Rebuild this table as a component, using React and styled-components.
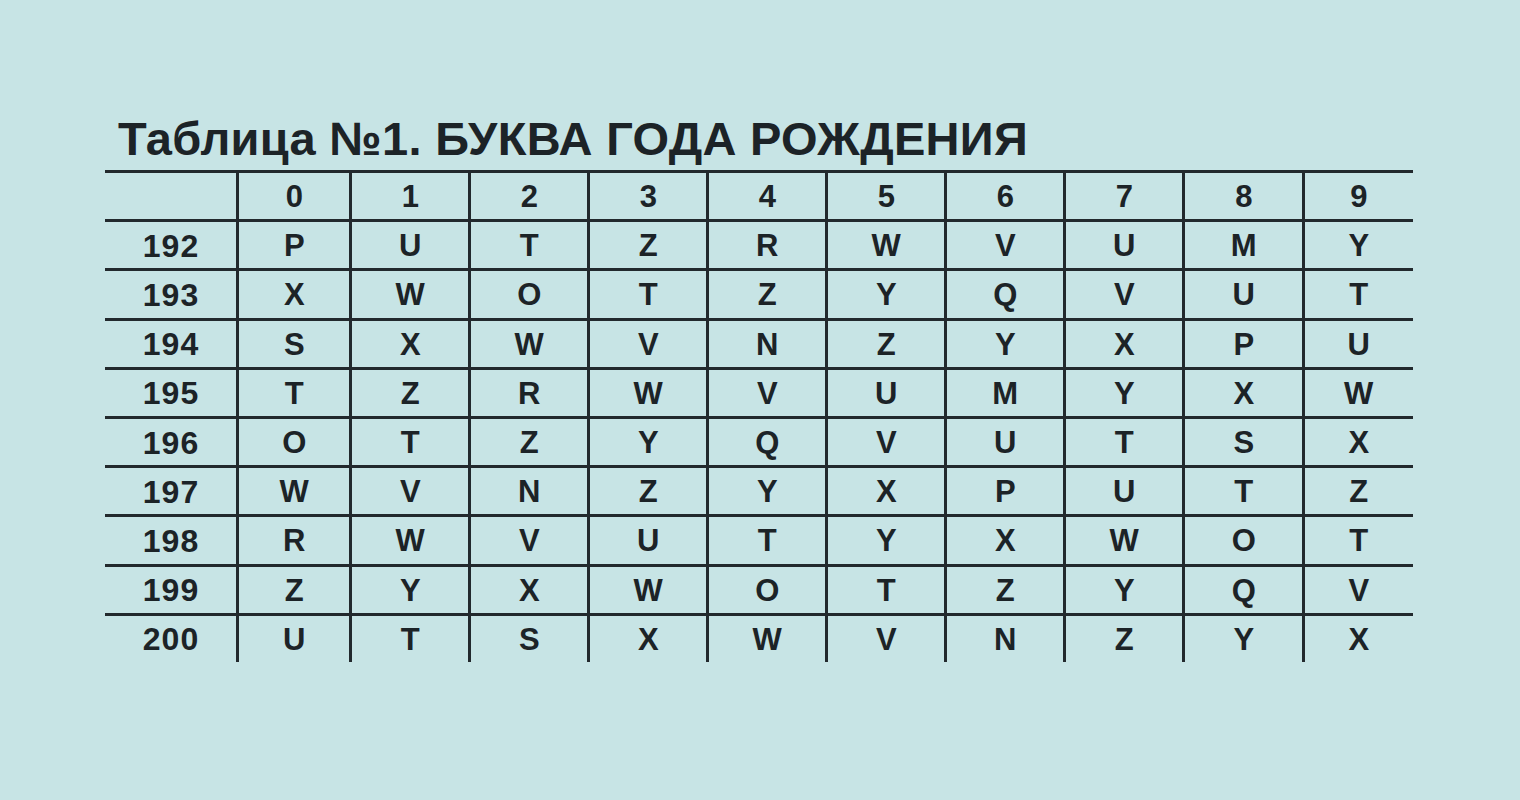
import React from 'react';
import styled, { createGlobalStyle } from 'styled-components';

const GlobalStyle = createGlobalStyle`
  html, body {
    margin: 0;
    padding: 0;
    background: #c7e4e5;
  }
  * { box-sizing: border-box; }
`;

const INK = '#1c2327';
const LINE = '#22292d';

const COLS = '132px 113px 119px 119px 119px 119px 119px 119px 119px 120px 110px';

const digits = ['0', '1', '2', '3', '4', '5', '6', '7', '8', '9'];

const rows = [
  ['192', 'PUTZRWVUMY'],
  ['193', 'XWOTZYQVUT'],
  ['194', 'SXWVNZYXPU'],
  ['195', 'TZRWVUMYXW'],
  ['196', 'OTZYQVUTSX'],
  ['197', 'WVNZYXPUTZ'],
  ['198', 'RWVUTYXWOT'],
  ['199', 'ZYXWOTZYQV'],
  ['200', 'UTSXWVNZYX'],
];

export default function App() {
  return (
    <>
      <GlobalStyle />
      <Page>
        <Title>Таблица №1. БУКВА ГОДА РОЖДЕНИЯ</Title>
        <Table>
          <Row>
            <Cell $first />
            {digits.map((d) => (
              <Cell key={d}>{d}</Cell>
            ))}
          </Row>
          {rows.map(([year, letters]) => (
            <Row key={year}>
              <Cell $first>{year}</Cell>
              {letters.split('').map((l, i) => (
                <Cell key={i}>{l}</Cell>
              ))}
            </Row>
          ))}
        </Table>
      </Page>
    </>
  );
}

const Page = styled.div`
  min-height: 100vh;
  background: #c7e4e5;
  padding: 115px 0 0 105px;
  font-family: "Liberation Sans", Arial, sans-serif;
  color: ${INK};
`;

const Title = styled.h1`
  margin: 0 0 8px 13px;
  font-size: 47px;
  line-height: 47px;
  font-weight: 700;
  letter-spacing: 0.3px;
  color: ${INK};
  white-space: nowrap;
`;

const Table = styled.div`
  width: 1308px;
  display: flex;
  flex-direction: column;
`;

const Row = styled.div`
  display: grid;
  grid-template-columns: ${COLS};
  height: 49.2px;
  border-top: 3px solid ${LINE};
`;

/* first cell of a row holds the year label, no left rule */
const Cell = styled.div`
  display: flex;
  align-items: center;
  justify-content: center;
  padding-top: 1px;
  border-left: ${(p) => (p.$first ? 'none' : `3px solid ${LINE}`)};
  margin-left: ${(p) => (p.$first ? '0' : '-1.5px')};
  font-size: ${(p) => (p.$first ? '32px' : '31px')};
  letter-spacing: ${(p) => (p.$first ? '1px' : '0')};
  font-weight: 700;
  line-height: 1;
  color: ${INK};
`;
